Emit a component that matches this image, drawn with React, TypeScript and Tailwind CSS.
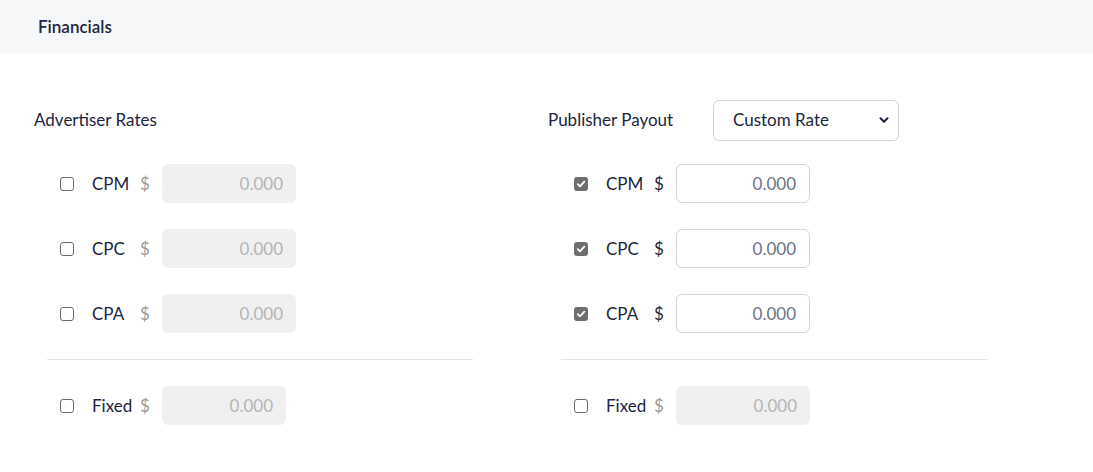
import React from 'react';

type Rate = { label: string; checked: boolean };

const FONT = { fontFamily: 'Lato, "Open Sans", sans-serif' };

function Box({ checked }: { checked: boolean }) {
  if (checked) {
    return (
      <span className="flex h-[14px] w-[14px] items-center justify-center rounded-[3px] bg-[#6e6e6e]">
        <svg width="10" height="10" viewBox="0 0 10 10">
          <path d="M1.8 5.2 L4 7.3 L8.3 2.6" fill="none" stroke="white" strokeWidth="1.8" strokeLinecap="round" strokeLinejoin="round" />
        </svg>
      </span>
    );
  }
  return <span className="block h-[14px] w-[14px] rounded-[3px] border border-[#6b6b6b] bg-white" />;
}

function RateRow({ label, checked, active, inputW = 'w-[134px]' }: Rate & { active: boolean; inputW?: string }) {
  return (
    <div className="flex h-[39px] items-center">
      <div className="ml-[26px] w-[32px]">
        <Box checked={checked} />
      </div>
      <span className="w-[48px] text-[17px] text-[#1d2640]">{label}</span>
      <span className={`w-[22px] text-[17px] ${active ? 'text-[#1d2640]' : 'text-[#9a9a9a]'}`}>$</span>
      <div
        className={`flex h-[39px] ${inputW} items-center justify-end rounded-[6px] pr-[13px] text-[17px] ${
          active ? 'border border-[#cfd3da] bg-white text-[#6b7385]' : 'bg-[#f0f0f0] text-[#b4b4b4]'
        }`}
      >
        0.000
      </div>
    </div>
  );
}

function Column({ title, active, select }: { title: string; active: boolean; select?: boolean }) {
  const rates: Rate[] = [
    { label: 'CPM', checked: active },
    { label: 'CPC', checked: active },
    { label: 'CPA', checked: active },
  ];
  return (
    <div className="w-[514px]">
      <div className="flex h-[40px] items-center">
        <span className="w-[165px] text-[17px] text-[#1d2640]">{title}</span>
        {select && (
          <div className="flex h-[41px] w-[186px] items-center justify-between rounded-[6px] border border-[#cfd3da] bg-white pl-[19px] pr-[8px] text-[17px] text-[#1d2640]">
            <span>Custom Rate</span>
            <svg width="12" height="12" viewBox="0 0 12 12">
              <path d="M2.5 4.2 L6 7.7 L9.5 4.2" fill="none" stroke="#1d2640" strokeWidth="2" strokeLinecap="round" strokeLinejoin="round" />
            </svg>
          </div>
        )}
      </div>
      <div className="mt-[24px] flex flex-col gap-[26px]">
        {rates.map((r) => (
          <RateRow key={r.label} {...r} active={active} />
        ))}
      </div>
      <div className="ml-[13px] mt-[26px] h-px w-[426px] bg-[#e4e4e4]" />
      <div className="mt-[26px]">
        <RateRow label="Fixed" checked={false} active={false} inputW={active ? 'w-[134px]' : 'w-[124px]'} />
      </div>
    </div>
  );
}

export default function App() {
  return (
    <div className="min-h-[472px] w-full bg-white" style={FONT}>
      <div className="flex h-[53px] items-center bg-[#f6f7f9] pl-[38px]">
        <h2 className="text-[17px] font-semibold text-[#1d2640]">Financials</h2>
      </div>
      <div className="flex pl-[34px] pt-[47px]">
        <Column title="Advertiser Rates" active={false} />
        <Column title="Publisher Payout" active={true} select />
      </div>
    </div>
  );
}
